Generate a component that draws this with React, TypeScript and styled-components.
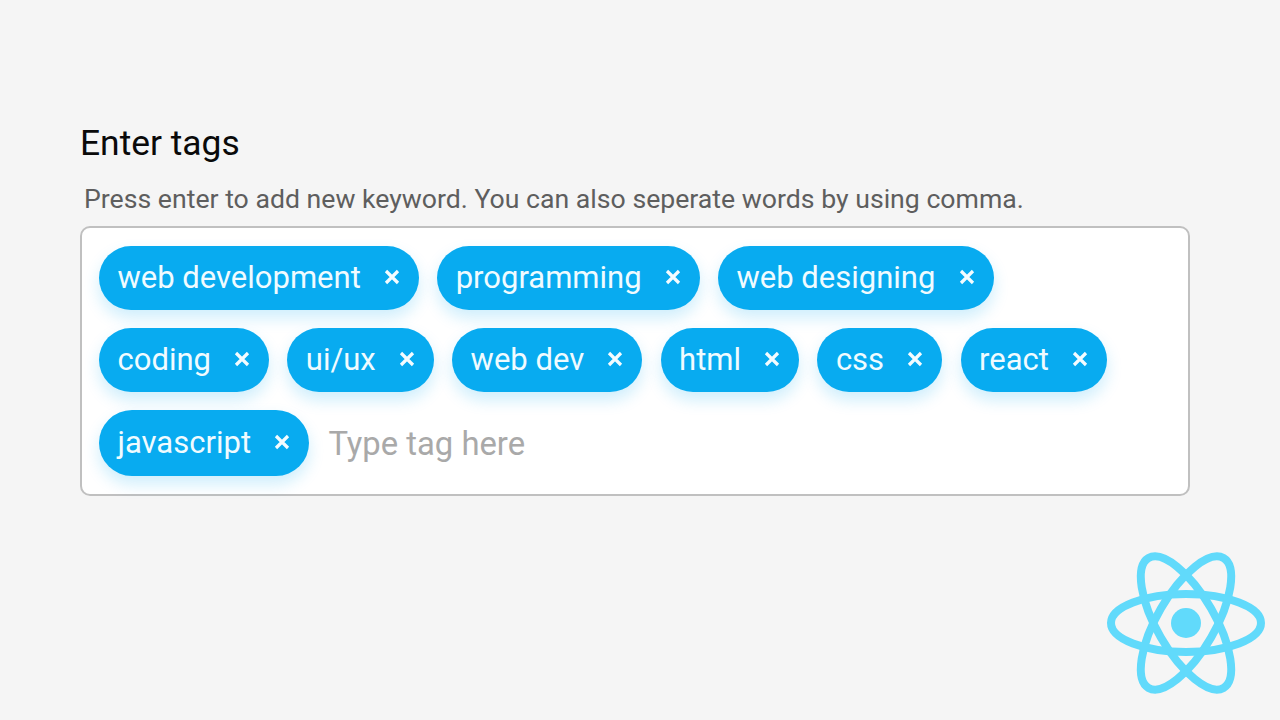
import React from "react";
import styled, { createGlobalStyle } from "styled-components";

const Global = createGlobalStyle`
  html, body { margin: 0; padding: 0; background: #f5f5f5; }
  body { font-family: Roboto, "Liberation Sans", sans-serif; }
`;

const Page = styled.div`
  position: relative;
  width: 1280px;
  height: 720px;
  overflow: hidden;
  padding: 122px 90px 0 80px;
  box-sizing: border-box;
`;
const Title = styled.h2`
  margin: 0;
  font-size: 35.4px;
  line-height: 42px;
  font-weight: 400;
  color: #0a0a0a;
`;
const Hint = styled.p`
  margin: 16px 0 8px 4px;
  font-size: 26.65px;
  line-height: 38px;
  font-weight: 400;
  color: #5e5e5e;
  white-space: nowrap;
`;
const Box = styled.div`
  box-sizing: border-box;
  width: 1110px;
  height: 270px;
  background: #fff;
  border: 2px solid #c0c0c0;
  border-radius: 10px;
  padding: 18px 17px;
  display: flex;
  flex-wrap: wrap;
  align-content: flex-start;
  align-items: center;
  gap: 18px 18.2px;
`;
const Tag = styled.div<{ $tall?: boolean }>`
  height: ${(p) => (p.$tall ? 66 : 64)}px;
  box-sizing: border-box;
  display: flex;
  align-items: center;
  padding: 0 19px 2px 18.5px;
  border-radius: 33px;
  background: #08abf0;
  color: #f0fbff;
  font-size: 31px;
  box-shadow: 0 8px 16px rgba(10, 169, 239, 0.2);
`;
const Close = styled.svg`
  width: 16px;
  height: 16px;
  margin-left: 23.2px;
  stroke: #f4fcff;
  stroke-width: 3.2;
  fill: none;
`;
const Input = styled.div`
  flex: 1;
  padding-top: 2px;
  margin-left: 1px;
  font-size: 32.8px;
  color: #a9a9a9;
`;
const Logo = styled.svg`
  position: absolute;
  left: 1106px;
  top: 543px;
  width: 160px;
  height: 160px;
`;

const rows = [
  "web development", "programming", "web designing",
  "coding", "ui/ux", "web dev", "html", "css", "react",
];

const TagItem = ({ label, tall }: { label: string; tall?: boolean }) => (
  <Tag $tall={tall}>
    {label}
    <Close viewBox="0 0 16 16"><path d="M2 2 14 14M14 2 2 14" /></Close>
  </Tag>
);

export default function App() {
  return (
    <Page>
      <Global />
      <Title>Enter tags</Title>
      <Hint>Press enter to add new keyword. You can also seperate words by using comma.</Hint>
      <Box>
        {rows.map((t) => <TagItem key={t} label={t} />)}
        <TagItem label="javascript" tall />
        <Input>Type tag here</Input>
      </Box>
      <Logo viewBox="0 0 160 160">
        <g fill="none" stroke="#61dafb" strokeWidth="8">
          <ellipse cx="80" cy="80" rx="75" ry="29" />
          <ellipse cx="80" cy="80" rx="75" ry="29" transform="rotate(60 80 80)" />
          <ellipse cx="80" cy="80" rx="75" ry="29" transform="rotate(120 80 80)" />
        </g>
        <circle cx="80" cy="80" r="15" fill="#61dafb" />
      </Logo>
    </Page>
  );
}
